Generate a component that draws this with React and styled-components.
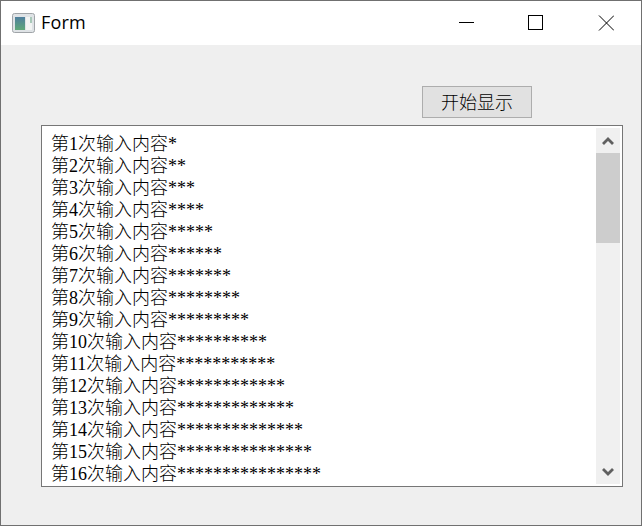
import React from "react";
import styled, { createGlobalStyle } from "styled-components";

const GlobalStyle = createGlobalStyle`
    html, body {
        margin: 0;
        padding: 0;
        background: #efefef;
    }
`;

const lines = Array.from({ length: 16 }, (_, i) => `第${i + 1}次输入内容${"*".repeat(i + 1)}`);

function App() {
    return (
        <Window>
            <GlobalStyle />
            <TitleBar>
                <AppIcon viewBox="0 0 24 20">
                    <defs>
                        <linearGradient id="pane" x1="0" y1="0" x2="0" y2="1">
                            <stop offset="0" stopColor="#4f7f9e" />
                            <stop offset="1" stopColor="#5fa878" />
                        </linearGradient>
                    </defs>
                    <rect x="0.5" y="0.5" width="22" height="19" rx="2" fill="#dfe3e6" stroke="#a0a4a8" />
                    <rect x="3" y="4" width="10" height="13" fill="url(#pane)" />
                    <rect x="14" y="4" width="6" height="13" fill="#f2f4f3" />
                    <rect x="18" y="4" width="2" height="6" fill="#a9c9b9" />
                </AppIcon>
                <Title>Form</Title>
                <Caption>
                    <CaptionButton>
                        <svg width="16" height="16" viewBox="0 0 16 16">
                            <path d="M1 7.5H16" stroke="#000" fill="none" />
                        </svg>
                    </CaptionButton>
                    <CaptionButton>
                        <svg width="16" height="16" viewBox="0 0 16 16">
                            <rect x="0.5" y="0.5" width="14" height="14" stroke="#000" fill="none" />
                        </svg>
                    </CaptionButton>
                    <CaptionButton>
                        <svg width="16" height="16" viewBox="0 0 16 16">
                            <path d="M1 0.5L16 15.5M16 0.5L1 15.5" stroke="#000" fill="none" />
                        </svg>
                    </CaptionButton>
                </Caption>
            </TitleBar>
            <Body>
                <ButtonRow>
                    <StartButton>开始显示</StartButton>
                </ButtonRow>
                <ListBox>
                    <ListText>
                        {lines.map((line) => (
                            <Line key={line}>{line}</Line>
                        ))}
                    </ListText>
                    <ScrollBar>
                        <Arrow>
                            <svg width="14" height="10" viewBox="0 0 14 10">
                                <path d="M2 8L7 3L12 8" stroke="#606060" strokeWidth="2.8" fill="none" />
                            </svg>
                        </Arrow>
                        <Track>
                            <Thumb />
                        </Track>
                        <Arrow>
                            <svg width="14" height="10" viewBox="0 0 14 10">
                                <path d="M2 2L7 7L12 2" stroke="#606060" strokeWidth="2.8" fill="none" />
                            </svg>
                        </Arrow>
                    </ScrollBar>
                </ListBox>
            </Body>
        </Window>
    );
}

const Window = styled.div`
    width: 642px;
    height: 526px;
    box-sizing: border-box;
    border: 1px solid #707070;
    display: flex;
    flex-direction: column;
    background: #efefef;
    overflow: hidden;
`;

const TitleBar = styled.div`
    height: 44px;
    flex: none;
    background: #fff;
    display: flex;
    align-items: center;
    padding-left: 11px;
`;

const AppIcon = styled.svg`
    width: 24px;
    height: 20px;
    margin-right: 5px;
    margin-top: -1px;
`;

const Title = styled.span`
    font-family: "Open Sans", "Liberation Sans", sans-serif;
    font-size: 18px;
    letter-spacing: 0.2px;
    color: #000;
    margin-top: -2px;
`;

const Caption = styled.div`
    margin-left: auto;
    display: flex;
    height: 100%;
`;

const CaptionButton = styled.div`
    width: 70px;
    display: flex;
    align-items: center;
    justify-content: center;
`;

const Body = styled.div`
    flex: 1;
    display: flex;
    flex-direction: column;
    padding: 41px 18px 38px 40px;
    min-height: 0;
`;

const ButtonRow = styled.div`
    display: flex;
    padding-left: 381px;
    margin-bottom: 7px;
`;

const StartButton = styled.button`
    width: 110px;
    height: 32px;
    padding: 0 0 3px;
    box-sizing: border-box;
    background: #e1e1e1;
    border: 1px solid #adadad;
    border-radius: 0;
    color: #000;
    font-family: "Noto Sans CJK SC", sans-serif;
    font-size: 18px;
    font-weight: 300;
    line-height: 1;
`;

const ListBox = styled.div`
    flex: 1;
    min-height: 0;
    box-sizing: border-box;
    border: 1px solid #767676;
    background: #fff;
    display: flex;
    padding: 2px;
`;

const ListText = styled.div`
    flex: 1;
    min-width: 0;
    overflow: hidden;
    padding: 5px 0 0 7px;
    background: #fff;
`;

const Line = styled.div`
    height: 22px;
    line-height: 22px;
    font-family: "Liberation Serif", "Noto Sans CJK SC", serif;
    font-size: 18px;
    font-weight: 300;
    color: #000;
    white-space: nowrap;
`;

const ScrollBar = styled.div`
    width: 24px;
    flex: none;
    background: #f0f0f0;
    display: flex;
    flex-direction: column;
`;

const Arrow = styled.div`
    height: 25px;
    flex: none;
    display: flex;
    align-items: center;
    justify-content: center;
`;

const Track = styled.div`
    flex: 1;
    min-height: 0;
`;

const Thumb = styled.div`
    height: 90px;
    background: #cdcdcd;
`;

export default App;
